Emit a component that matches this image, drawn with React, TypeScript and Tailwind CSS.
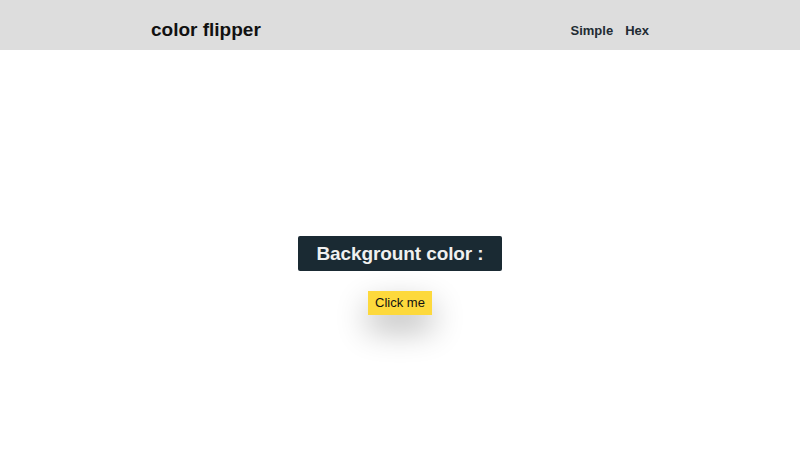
import React, { useState } from 'react';

const colors = ['#ffffff', '#f15025', '#4caf50', '#2196f3', 'rgba(133,122,200)'];

export default function App() {
  const [color, setColor] = useState('');
  const [bg, setBg] = useState('#ffffff');

  const handleClick = () => {
    const next = colors[Math.floor(Math.random() * colors.length)];
    setBg(next);
    setColor(next);
  };

  return (
    <div className="min-h-screen font-['Liberation_Sans',Arial,sans-serif]" style={{ backgroundColor: bg }}>
      {/* Nav */}
      <nav className="h-[50px] bg-[#dddddd]">
        <div className="mx-auto flex h-full w-[498px] items-center justify-between">
          <h1 className="pt-[10px] text-[19px] font-bold text-[#111111]">color flipper</h1>
          <ul className="flex gap-3 pt-[12px] text-[13px] font-bold text-[#222b33]">
            <li>Simple</li>
            <li>Hex</li>
          </ul>
        </div>
      </nav>

      {/* Main */}
      <main className="flex flex-col items-center pt-[186px]">
        <h2 className="rounded-[2px] bg-[#1a2a33] px-[18px] py-[5px] text-[19px] font-bold leading-[25px] text-[#f0f0f0] tracking-[-0.1px]">
          Backgrount color : {color}
        </h2>
        <button
          onClick={handleClick}
          className="mt-[20px] h-[24px] w-[64px] bg-[#fdd93c] text-[13px] text-[#111111] shadow-[0_14px_32px_rgba(0,0,0,0.3)]"
        >
          Click me
        </button>
      </main>
    </div>
  );
}
